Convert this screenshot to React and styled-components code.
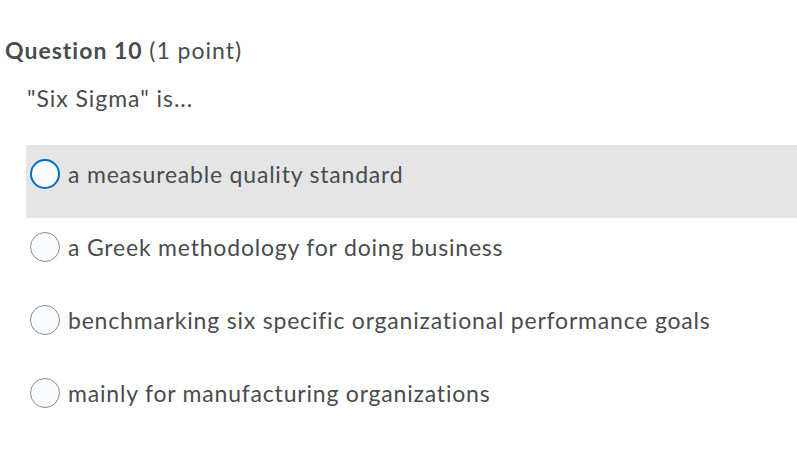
import styled, { createGlobalStyle } from 'styled-components';

const GlobalStyle = createGlobalStyle`
  html, body {
    margin: 0;
    padding: 0;
    background: #ffffff;
  }
  body {
    font-family: Lato, "Open Sans", sans-serif;
    color: #494c4e;
    font-variant-ligatures: none;
  }
`;

const Page = styled.div`
  width: 797px;
  height: 454px;
  overflow: hidden;
  padding-top: 33px;
  box-sizing: border-box;
`;

const Heading = styled.h2`
  margin: 0 0 0 5px;
  font-size: 23px;
  line-height: 34px;
  font-weight: 700;
  color: #494c4e;
  letter-spacing: 1px;
`;

const Points = styled.span`
  font-weight: 400;
`;

const Prompt = styled.p`
  margin: 15px 0 0 27px;
  font-size: 23px;
  line-height: 32px;
  letter-spacing: 0.95px;
`;

const Options = styled.div`
  margin: 31px 0 0 26px;
  display: flex;
  flex-direction: column;
`;

const Row = styled.label`
  display: flex;
  align-items: center;
  gap: 8px;
  height: 73px;
  box-sizing: border-box;
  padding: 0 0 15px 4px;
  background: ${p => (p.$focused ? '#e5e5e5' : 'transparent')};
  font-size: 23px;
  letter-spacing: 0.8px;
  cursor: pointer;
`;

const Radio = styled.span`
  width: 30px;
  height: 30px;
  flex: none;
  box-sizing: border-box;
  border-radius: 50%;
  background: #f9fbff;
  border: ${p => (p.$focused ? '2px solid #006fbf' : '1px solid #868c8f')};
`;

const options = [
  'a measureable quality standard',
  'a Greek methodology for doing business',
  'benchmarking six specific organizational performance goals',
  'mainly for manufacturing organizations',
];

export default function App() {
  return (
    <Page>
      <GlobalStyle />
      <Heading>
        Question 10 <Points>(1 point)</Points>
      </Heading>
      <Prompt>"Six Sigma" is...</Prompt>
      <Options>
        {options.map((text, i) => (
          <Row key={i} $focused={i === 0}>
            <Radio $focused={i === 0} />
            {text}
          </Row>
        ))}
      </Options>
    </Page>
  );
}
